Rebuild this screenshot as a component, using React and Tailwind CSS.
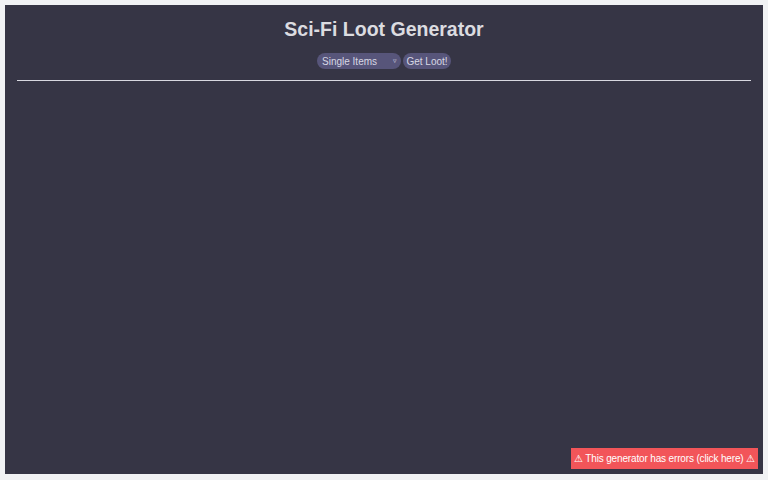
export default function App() {
  return (
    <div className="h-[480px] w-[768px] bg-[#f1f2f4] p-[5px]" style={{ fontFamily: '"Liberation Sans", Arial, sans-serif' }}>
      <div className="relative h-[469px] w-[758px] bg-[#363545] px-3 pt-[12px]">
        <h1 className="text-center text-[19.5px] font-bold leading-[24px] text-[#dcdce0]">Sci-Fi Loot Generator</h1>
        <div className="mt-[12px] flex justify-center gap-[2px]">
          <div className="relative flex h-[16px] w-[84px] items-center rounded-full bg-[#57557a] pl-[5px] text-[10px] text-[#d8d8e4]">
            <span>Single Items</span>
            <span className="absolute right-[4px] top-[3px] text-[7px]">▿</span>
          </div>
          <div className="flex h-[16px] w-[48px] items-center justify-center rounded-full bg-[#57557a] text-[10px] text-[#d8d8e4]">Get Loot!</div>
        </div>
        <div className="mt-[11px] h-px bg-[#d8d8e0]"></div>
        <div className="absolute bottom-[5px] right-[5px] flex h-[21px] w-[187px] items-center justify-center whitespace-nowrap bg-[#f25559] text-[10px] tracking-[-0.15px] text-white">
          ⚠ This generator has errors (click here) ⚠
        </div>
      </div>
    </div>
  );
}
